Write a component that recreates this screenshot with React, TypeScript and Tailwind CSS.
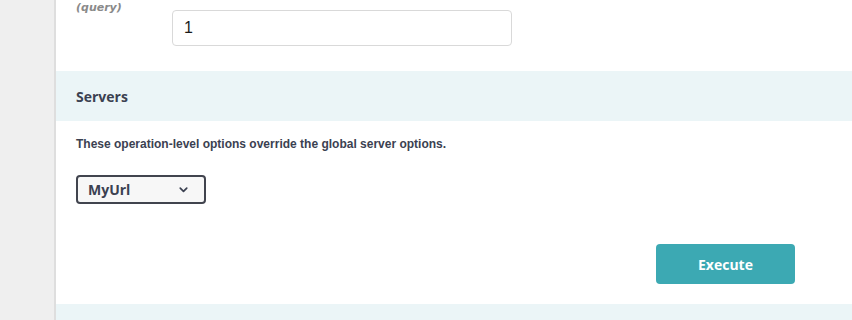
import React from "react";

const heading = { fontFamily: '"Open Sans", "Noto Sans", sans-serif' };
const body = { fontFamily: '"Liberation Sans", Arial, sans-serif' };

function Chevron() {
  return (
    <svg width="13" height="13" viewBox="0 0 20 20" className="text-[#3b4151]">
      <path
        d="M5 8l5 5 5-5"
        fill="none"
        stroke="currentColor"
        strokeWidth="2.6"
        strokeLinecap="round"
        strokeLinejoin="round"
      />
    </svg>
  );
}

export default function App() {
  return (
    <div className="flex h-[320px] w-[852px] overflow-hidden bg-white">
      <div className="w-[56px] shrink-0 border-r-2 border-[#dedede] bg-[#efefef]" />
      <div className="flex flex-1 flex-col">
        <div className="flex h-[71px] shrink-0 items-start">
          <div className="w-[116px] pl-5">
            <span
              className="block text-[11px] leading-[16px] font-bold italic text-[#8a8a8a]"
              style={{ fontFamily: '"DejaVu Sans", Verdana, sans-serif' }}
            >
              (query)
            </span>
          </div>
          <input
            readOnly
            value="1"
            className="mt-[10px] h-[36px] w-[340px] rounded-[4px] border border-[#d9d9d9] bg-white px-[11px] text-[16px] text-[#1a1a1a] outline-none"
            style={body}
          />
        </div>

        <div className="flex h-[50px] shrink-0 items-center bg-[#ebf5f7] px-5">
          <h4 className="text-[14px] font-bold text-[#3b4151]" style={heading}>
            Servers
          </h4>
        </div>

        <div className="flex flex-1 flex-col px-5">
          <p className="mt-[14px] text-[12px] font-bold text-[#3b4151]" style={body}>
            These operation-level options override the global server options.
          </p>
          <div
            className="mt-[22px] flex h-[29px] w-[130px] items-center justify-between rounded-[4px] border-2 border-[#41444e] bg-[#f7f7f7] pl-[10px] pr-[14px]"
            style={heading}
          >
            <span className="text-[14px] font-bold text-[#3b4151]">MyUrl</span>
            <Chevron />
          </div>
          <div className="mt-[40px] flex justify-end pr-[37px]">
            <button
              className="h-[40px] w-[139px] rounded-[4px] bg-[#3ca9b3] text-[14px] font-bold text-white"
              style={heading}
            >
              Execute
            </button>
          </div>
        </div>

        <div className="h-[16px] shrink-0 bg-[#ebf5f7]" />
      </div>
    </div>
  );
}
